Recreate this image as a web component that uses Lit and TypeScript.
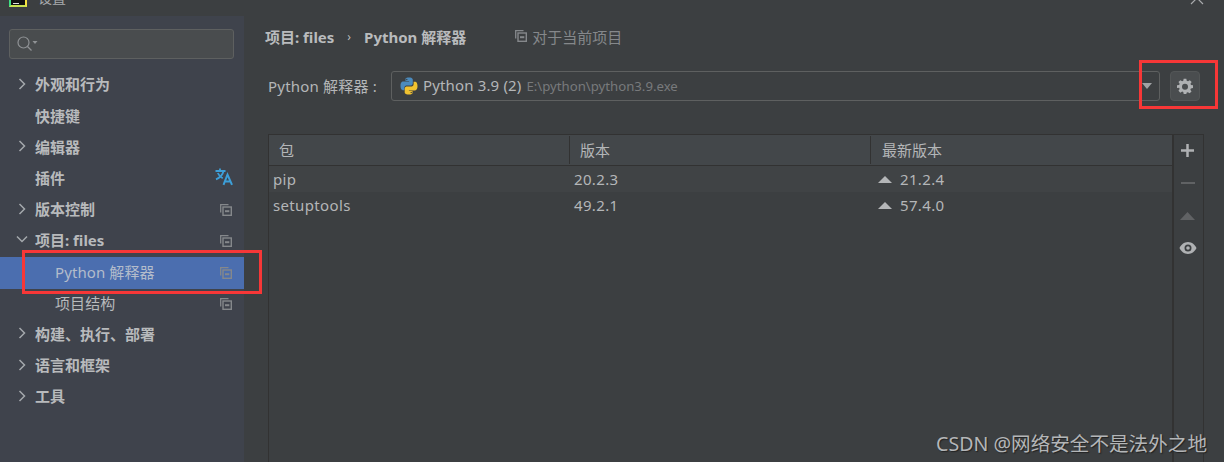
import { LitElement, html, css, svg } from 'lit';
import { customElement } from 'lit/decorators.js';

const copyIcon = svg`<svg class="copy" width="12" height="12" viewBox="0 0 12 12" fill="none" stroke="currentColor">
  <path d="M.7 8.500V.7h7.800" stroke-width="1.300"/><rect x="3" y="3" width="8.300" height="8.300" stroke-width="1.400"/><path d="M5 7.200h4.300" stroke-width="2"/></svg>`;

const chevronRight = svg`<svg width="9" height="12" viewBox="0 0 9 12" fill="none" stroke="#a4a8ac" stroke-width="1.500"><path d="M1.500 1l5 5-5 5"/></svg>`;
const chevronDown = svg`<svg width="12" height="9" viewBox="0 0 12 9" fill="none" stroke="#a4a8ac" stroke-width="1.500"><path d="M1 1.500l5 5 5-5"/></svg>`;

const translateIcon = svg`<svg width="18" height="18" viewBox="0 0 18 18" fill="none" stroke="#3d9fd8" stroke-width="1.800">
  <path d="M0.500 3h10M5 0.500V3M8.500 3c-.7 3.500-3.400 6.600-7.500 8.300M2.800 5c1 2.400 3 4.300 5 5.300"/>
  <path d="M8.500 16.800L12.500 6.500l4.500 10.300M10 13.500h5.600" stroke-width="2"/></svg>`;

const pythonIcon = svg`<svg width="18" height="18" viewBox="0 0 18 18">
  <path fill="#4b8bbe" d="M8.800.5C5.400.5 5.500 2 5.500 2v2h3.600v.6H3.300S.5 4.300.5 8.800s2.400 4.400 2.400 4.400h1.500v-2.200s-.1-2.500 2.400-2.500h3.700s2.300 0 2.300-2.300V2.800S13.200.5 8.800.5zM6.800 1.800a.7.7 0 110 1.400.7.700 0 010-1.400z"/>
  <path fill="#f0c230" d="M9.200 17.500c3.400 0 3.300-1.500 3.300-1.500v-2H8.900v-.6h5.800s2.800.300 2.800-4.200-2.400-4.400-2.400-4.400h-1.500V7s.1 2.500-2.400 2.500H7S4.700 9.500 4.700 11.800v3.400s-.4 2.300 4.500 2.300zm2-1.300a.7.7 0 110-1.400.7.700 0 010 1.400z"/></svg>`;

const gearIcon = svg`<svg width="16" height="16" viewBox="0 0 24 24" fill="#afb1b3"><path fill-rule="evenodd" d="M10 1h4l.6 3.200 1.900.8 2.700-1.800 2.800 2.800-1.800 2.700.8 1.900L24 11v4l-3.200.6-.8 1.900 1.800 2.700-2.800 2.800-2.700-1.800-1.700.7L14 24h-4l-.6-3.100-1.700-.7-2.700 1.800-2.800-2.800 1.800-2.700-.8-1.900L0 15v-4l3.200-.4.800-1.900-1.800-2.700L5 3.200l2.700 1.800 1.700-.8zM12 8.500a4.500 4.500 0 100 9 4.500 4.500 0 000-9z"/></svg>`;

const eyeIcon = svg`<svg width="18" height="14" viewBox="0 0 18 14"><path fill="#afb1b3" fill-rule="evenodd" d="M9 1c4 0 7 2.800 8.500 6C16 10.200 13 13 9 13S2 10.200.5 7C2 3.800 5 1 9 1zm0 2.500a3.500 3.500 0 100 7 3.500 3.500 0 000-7zM9 5.200a1.800 1.800 0 110 3.600 1.800 1.800 0 010-3.600z"/></svg>`;

const searchIcon = svg`<svg width="22" height="16" viewBox="0 0 22 16" fill="none" stroke="#8f9295" stroke-width="1.200"><circle cx="6.500" cy="6.500" r="5.500"/><path d="M10.500 10.500l4 4"/><path d="M15.500 5h5l-2.500 3z" fill="#8f9295" stroke="none"/></svg>`;

type NavItem = { label: string; arrow?: 'right' | 'down'; icon?: 'copy' | 'translate'; sub?: boolean; selected?: boolean };

const navItems: NavItem[] = [
  { label: '外观和行为', arrow: 'right' },
  { label: '快捷键' },
  { label: '编辑器', arrow: 'right' },
  { label: '插件', icon: 'translate' },
  { label: '版本控制', arrow: 'right', icon: 'copy' },
  { label: '项目: files', arrow: 'down', icon: 'copy' },
  { label: 'Python 解释器', sub: true, selected: true, icon: 'copy' },
  { label: '项目结构', sub: true, icon: 'copy' },
  { label: '构建、执行、部署', arrow: 'right' },
  { label: '语言和框架', arrow: 'right' },
  { label: '工具', arrow: 'right' },
];

const packages = [
  { name: 'pip', version: '20.2.3', latest: '21.2.4' },
  { name: 'setuptools', version: '49.2.1', latest: '57.4.0' },
];

@customElement('app-root')
export class AppRoot extends LitElement {
  static styles = css`
    :host {
      display: block;
      position: relative;
      width: 1224px;
      height: 462px;
      overflow: hidden;
      background: #3c3f41;
      color: #b4b6b8;
      font-family: 'Noto Sans', 'Noto Sans CJK SC', sans-serif;
      font-size: 15px;
    }
    .titlebar {
      height: 16px;
      box-sizing: border-box;
      display: flex;
      align-items: flex-end;
      overflow: hidden;
      padding: 0 20px 9px 9px;
    }
    .logo {
      width: 18px;
      height: 18px;
      box-sizing: border-box;
      flex: none;
      border-left: 2px solid #3ddc84;
      border-right: 2px solid #f5e342;
      border-bottom: 2px solid #c8e050;
      background: #111;
      display: flex;
      align-items: flex-end;
      padding: 0 0 1px 2px;
    }
    .logo i {
      width: 6px;
      height: 1px;
      background: #ddd;
    }
    .title {
      margin-left: 11px;
      line-height: 20px;
      font-size: 14px;
      color: #a9abad;
      flex: 1;
      margin-bottom: -1px;
    }
    .close {
      flex: none;
      margin-bottom: 2px;
    }
    .body {
      display: flex;
      height: 446px;
    }
    .sidebar {
      width: 244px;
      flex: none;
      background: #3f434c;
      padding-top: 13px;
      box-sizing: border-box;
    }
    .search {
      margin: 0 10px 10.800px 9px;
      height: 30px;
      box-sizing: border-box;
      border: 1px solid #5e6060;
      border-radius: 3px;
      background: #494c4e;
      display: flex;
      align-items: center;
      padding-left: 7px;
    }
    .nav-row {
      height: 31.200px;
      box-sizing: border-box;
      display: flex;
      align-items: center;
      padding: 0 12px 3px 0;
      font-weight: 700;
      color: #b8babc;
    }
    .nav-row.sub {
      font-weight: 400;
    }
    .nav-row.selected {
      height: 32px;
      margin-bottom: -0.800px;
      background: #4b6eaf;
      color: #b3bccb;
    }
    .nav-row.sub .nav-label {
      letter-spacing: 0.1px;
    }
    .arrow {
      width: 35px;
      flex: none;
      display: flex;
      justify-content: center;
      padding-left: 9px;
      box-sizing: border-box;
    }
    .sub .arrow {
      width: 55px;
    }
    .nav-label {
      flex: 1;
    }
    .copy {
      color: #85888b;
      display: block;
    }
    .nav-row .copy {
      margin-top: 3px;
    }
    .translate {
      margin-right: -1px;
      display: flex;
    }
    .main {
      flex: 1;
      min-width: 0;
      padding: 0 20px 0 24px;
    }
    .crumbs {
      height: 40px;
      display: flex;
      align-items: center;
      margin-left: -3px;
      font-weight: 700;
      color: #b9bbbd;
    }
    .crumb-sep {
      margin: 0 13px;
      font-weight: 400;
      font-size: 12px;
    }
    .scope {
      margin-left: 49px;
      display: flex;
      align-items: center;
      gap: 5px;
      font-weight: 400;
      color: #85888b;
    }
    .interp {
      display: flex;
      align-items: center;
      margin-top: 15px;
    }
    .interp-label {
      width: 123px;
      flex: none;
      white-space: pre;
      margin-top: -2px;
      letter-spacing: 0.2px;
    }
    .combo {
      width: 769px;
      height: 30px;
      box-sizing: border-box;
      border: 1px solid #5e6060;
      border-radius: 3px;
      display: flex;
      align-items: center;
      padding-left: 8px;
      gap: 5px;
    }
    .combo-text {
      margin-top: -2px;
      letter-spacing: 0.15px;
    }
    .combo-path {
      font-size: 13.200px;
      color: #787a7c;
      flex: 1;
    }
    .drop {
      width: 0;
      height: 0;
      border-left: 5px solid transparent;
      border-right: 5px solid transparent;
      border-top: 6px solid #a0a2a4;
      margin-right: 7px;
    }
    .gear {
      width: 30px;
      height: 30px;
      margin-left: 10px;
      box-sizing: border-box;
      border: 1px solid #535657;
      border-radius: 4px;
      background: #4a4d4f;
      display: flex;
      align-items: center;
      justify-content: center;
    }
    .panel {
      margin-top: 33px;
      display: flex;
      height: 340px;
      border: 1px solid #323232;
      border-bottom: none;
    }
    .table {
      flex: 1;
    }
    .cols {
      display: grid;
      grid-template-columns: 300px 301px 1fr;
    }
    .thead {
      height: 30px;
      background: #43474a;
      border-bottom: 1px solid #323232;
      align-items: center;
    }
    .thead div {
      height: 28px;
      display: flex;
      align-items: center;
      padding: 0 0 2px 10px;
      box-sizing: border-box;
    }
    .thead div + div {
      border-left: 1px solid #323232;
    }
    .thead div:last-child {
      padding-left: 11px;
    }
    .trow {
      height: 26px;
      align-items: center;
      padding-left: 4px;
      letter-spacing: 0.35px;
    }
    .trow:nth-of-type(2) {
      background: #404345;
    }
    .trow .version {
      padding-left: 1px;
    }
    .trow .latest {
      display: flex;
      align-items: center;
      gap: 8px;
      padding-left: 4px;
    }
    .tri {
      width: 0;
      height: 0;
      border-left: 7.500px solid transparent;
      border-right: 7.500px solid transparent;
      border-bottom: 7px solid #b4b6b8;
    }
    .tools {
      width: 31px;
      flex: none;
      border-left: 2px solid #323232;
      display: flex;
      flex-direction: column;
      align-items: center;
      box-sizing: border-box;
    }
    .tool {
      height: 32.670px;
      display: flex;
      align-items: center;
      justify-content: center;
      margin-left: -2px;
    }
    .tool:first-child {
      margin-top: -1px;
    }
    .redbox {
      position: absolute;
      box-sizing: border-box;
      border: 3px solid #f73737;
    }
    .box-nav {
      left: 22px;
      top: 250px;
      width: 240px;
      height: 44px;
    }
    .box-gear {
      left: 1139px;
      top: 60px;
      width: 79px;
      height: 49px;
    }
    .watermark {
      position: absolute;
      right: 17px;
      top: 428px;
      font-size: 19.600px;
      color: #b4b6b8;
      text-shadow: 1px 1px 1px #222;
    }
  `;

  renderNav(item: NavItem) {
    const cls = `nav-row${item.sub ? ' sub' : ''}${item.selected ? ' selected' : ''}`;
    return html`
      <div class=${cls}>
        <span class="arrow">${item.arrow === 'right' ? chevronRight : item.arrow === 'down' ? chevronDown : ''}</span>
        <span class="nav-label">${item.label}</span>
        ${item.icon === 'copy' ? copyIcon : ''}
        ${item.icon === 'translate' ? html`<span class="translate">${translateIcon}</span>` : ''}
      </div>
    `;
  }

  render() {
    return html`
      <div class="titlebar">
        <span class="logo"><i></i></span>
        <span class="title">设置</span>
        <svg class="close" width="14" height="8" viewBox="0 0 14 8" fill="none" stroke="#a9abad" stroke-width="1.200"><path d="M1 7l6-6 6 6"/></svg>
      </div>
      <div class="body">
        <aside class="sidebar">
          <div class="search">${searchIcon}</div>
          ${navItems.map((n) => this.renderNav(n))}
        </aside>
        <section class="main">
          <div class="crumbs">
            <span>项目: files</span>
            <span class="crumb-sep">›</span>
            <span>Python 解释器</span>
            <span class="scope">${copyIcon}对于当前项目</span>
          </div>
          <div class="interp">
            <span class="interp-label">Python 解释器 :</span>
            <div class="combo">
              ${pythonIcon}
              <span class="combo-text">Python 3.9 (2)</span>
              <span class="combo-path">E:\\python\\python3.9.exe</span>
              <span class="drop"></span>
            </div>
            <div class="gear">${gearIcon}</div>
          </div>
          <div class="panel">
            <div class="table">
              <div class="cols thead"><div>包</div><div>版本</div><div>最新版本</div></div>
              ${packages.map((p) => html`
                <div class="cols trow">
                  <span>${p.name}</span>
                  <span class="version">${p.version}</span>
                  <span class="latest"><i class="tri"></i>${p.latest}</span>
                </div>
              `)}
            </div>
            <div class="tools">
              <div class="tool"><svg width="13" height="13" viewBox="0 0 13 13" fill="#afb1b3"><path d="M5.250 0h2.500v5.250H13v2.500H7.750V13h-2.500V7.750H0v-2.500h5.250z"/></svg></div>
              <div class="tool"><svg width="14" height="2" viewBox="0 0 14 2" fill="#606264"><path d="M0 0h14v2H0z"/></svg></div>
              <div class="tool"><svg width="15" height="8" viewBox="0 0 15 8" fill="#606264"><path d="M7.500 0L15 8H0z"/></svg></div>
              <div class="tool">${eyeIcon}</div>
            </div>
          </div>
        </section>
      </div>
      <div class="redbox box-nav"></div>
      <div class="redbox box-gear"></div>
      <div class="watermark">CSDN @网络安全不是法外之地</div>
    `;
  }
}
